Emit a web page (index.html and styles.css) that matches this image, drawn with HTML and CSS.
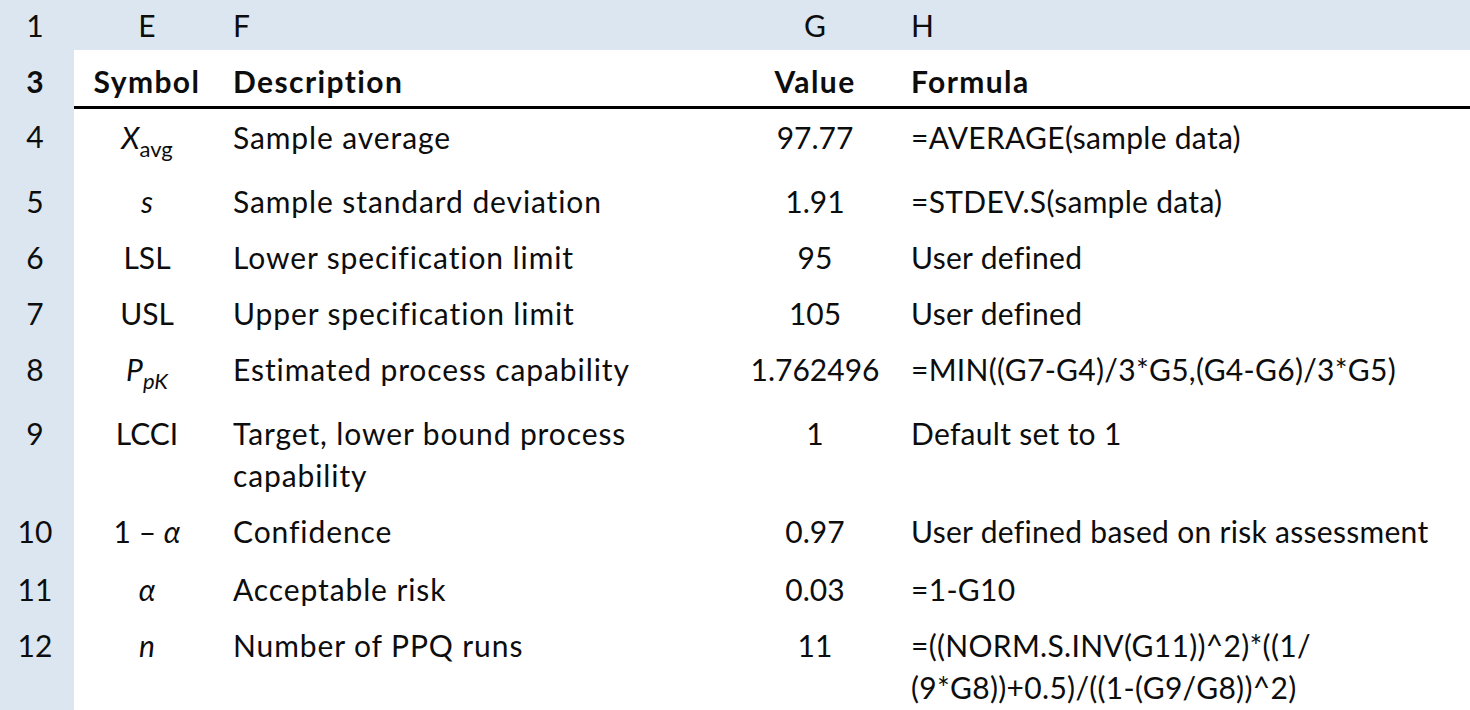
FILE: index.html
```html
<!DOCTYPE html>
<html>
<head>
<meta charset="utf-8">
<link rel="stylesheet" href="styles.css">
</head>
<body>
<table class="sheet">
  <colgroup>
    <col class="c-num"><col class="c-e"><col class="c-f"><col class="c-g"><col class="c-h">
  </colgroup>
  <tr class="colhead">
    <td class="num">1</td><td class="sym">E</td><td class="desc">F</td><td class="val">G</td><td class="formula">H</td>
  </tr>
  <tr class="head">
    <td class="num">3</td><td class="sym">Symbol</td><td class="desc">Description</td><td class="val">Value</td><td class="formula">Formula</td>
  </tr>
  <tr class="tall first">
    <td class="num">4</td><td class="sym"><i>X</i><sub>avg</sub></td><td class="desc">Sample average</td><td class="val">97.77</td><td class="formula">=AVERAGE(sample data)</td>
  </tr>
  <tr>
    <td class="num">5</td><td class="sym"><i>s</i></td><td class="desc">Sample standard deviation</td><td class="val">1.91</td><td class="formula">=STDEV.S(sample data)</td>
  </tr>
  <tr>
    <td class="num">6</td><td class="sym">LSL</td><td class="desc">Lower specification limit</td><td class="val">95</td><td class="formula">User defined</td>
  </tr>
  <tr>
    <td class="num">7</td><td class="sym">USL</td><td class="desc">Upper specification limit</td><td class="val">105</td><td class="formula">User defined</td>
  </tr>
  <tr class="tall">
    <td class="num">8</td><td class="sym"><i>P</i><sub><i>pK</i></sub></td><td class="desc">Estimated process capability</td><td class="val">1.762496</td><td class="formula">=MIN((G7-G4)/3*G5,(G4-G6)/3*G5)</td>
  </tr>
  <tr>
    <td class="num">9</td><td class="sym">LCCI</td><td class="desc">Target, lower bound process<br>capability</td><td class="val">1</td><td class="formula">Default set to 1</td>
  </tr>
  <tr class="gap">
    <td class="num">10</td><td class="sym">1 – <i>α</i></td><td class="desc">Confidence</td><td class="val">0.97</td><td class="formula">User defined based on risk assessment</td>
  </tr>
  <tr>
    <td class="num">11</td><td class="sym"><i>α</i></td><td class="desc">Acceptable risk</td><td class="val">0.03</td><td class="formula">=1-G10</td>
  </tr>
  <tr>
    <td class="num">12</td><td class="sym"><i>n</i></td><td class="desc">Number of PPQ runs</td><td class="val">11</td><td class="formula">=((NORM.S.INV(G11))^2)*((1/<br>(9*G8))+0.5)/((1-(G9/G8))^2)</td>
  </tr>
</table>
</body>
</html>
```

FILE: styles.css
```css
html, body {
  margin: 0;
  padding: 0;
  background: #ffffff;
}
body {
  font-family: Lato, "Open Sans", sans-serif;
  color: #0d0d0d;
  width: 1470px;
  height: 710px;
  overflow: hidden;
  font-variant-ligatures: none;
}
.sheet {
  border-collapse: collapse;
  table-layout: fixed;
  width: 1470px;
  font-size: 30px;
  line-height: 42px;
}
.c-num { width: 74px; }
.c-e { width: 146px; }
.c-f { width: 512px; }
.c-g { width: 166px; }
.c-h { width: 572px; }
.sheet td {
  padding: 7px 0 7px 0;
  vertical-align: top;
  white-space: nowrap;
}
.sheet td.num {
  background: #dbe6f0;
  text-align: center;
  padding-right: 4px;
}
.sheet td.sym { text-align: center; }
.sheet td.desc {
  padding-left: 13px;
  letter-spacing: 0.9px;
}
.sheet td.val { text-align: center; }
.sheet td.formula {
  padding-left: 13px;
  letter-spacing: 0.3px;
}

.colhead td {
  background: #dbe6f0;
  height: 36px;
  padding-top: 4px;
  padding-bottom: 4px;
}
.sheet .colhead td.desc,
.sheet .colhead td.formula { letter-spacing: 0; }
.head td {
  font-weight: 700;
  padding-top: 10px;
  padding-bottom: 4px;
}
.sheet .head td.sym,
.sheet .head td.desc,
.sheet .head td.val,
.sheet .head td.formula {
  letter-spacing: 1.4px;
}
.head td:not(.num) {
  border-bottom: 3px solid #000;
}
.sheet .first td { padding-top: 7px; }
.sheet .tall td { padding-bottom: 15px; }
.sheet .gap td { padding-bottom: 9px; }
sub {
  font-size: 22px;
  line-height: 0;
  vertical-align: -8px;
  letter-spacing: 0;
}
```
